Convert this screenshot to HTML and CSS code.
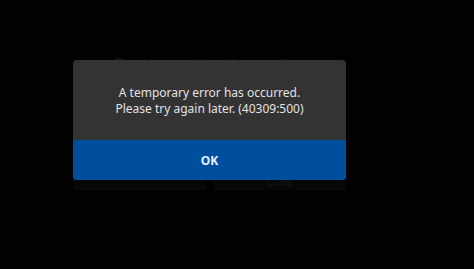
FILE: index.html
```html
<!DOCTYPE html>
<html>
<head>
<meta charset="utf-8">
<link rel="stylesheet" href="styles.css">
</head>
<body>
<div class="screen">
  <div class="bg">
    <div class="bg-title">Device registration notice</div>
    <div class="bg-row">
      <div class="bg-btn"></div>
      <div class="bg-btn"><span class="bg-code">Code</span></div>
    </div>
  </div>
  <div class="dialog">
    <div class="msg">
      <p>A temporary error has occurred.</p>
      <p>Please try again later. (40309:500)</p>
    </div>
    <div class="ok">OK</div>
  </div>
</div>
</body>
</html>
```
FILE: styles.css
```css
html, body {
  margin: 0;
  padding: 0;
  background: #000;
}
.screen {
  position: relative;
  width: 474px;
  height: 269px;
  overflow: hidden;
  background: #020202;
  font-family: "Noto Sans", "Open Sans", sans-serif;
}
.bg {
  display: flex;
  flex-direction: column;
  align-items: center;
  width: 273px;
  margin-left: 73px;
  padding-top: 53px;
}
.bg-title {
  color: #181818;
  font-size: 16px;
  line-height: 22px;
}
.bg-row {
  display: flex;
  gap: 7px;
  margin-top: 70px;
  width: 273px;
}
.bg-btn {
  flex: 1;
  height: 45px;
  background: #080808;
  display: flex;
  align-items: flex-start;
  justify-content: center;
  box-sizing: border-box;
  padding-top: 31px;
}
.bg-code {
  color: #1a1a1a;
  font-size: 11px;
  line-height: 12px;
}
.dialog {
  position: absolute;
  left: 73px;
  top: 60px;
  width: 273px;
  border-radius: 4px;
  overflow: hidden;
  background: #333333;
  box-shadow: 0 2px 5px rgba(0,0,0,0.5);
}
.msg {
  height: 80px;
  display: flex;
  flex-direction: column;
  justify-content: center;
  align-items: center;
  color: #e2e2e2;
  font-size: 12px;
  line-height: 16px;
  padding-top: 1px;
  box-sizing: border-box;
}
.msg p {
  margin: 0;
}
.ok {
  height: 40px;
  background: #004f9f;
  color: #e6efff;
  font-weight: bold;
  font-size: 12px;
  display: flex;
  align-items: center;
  justify-content: center;
}
```
